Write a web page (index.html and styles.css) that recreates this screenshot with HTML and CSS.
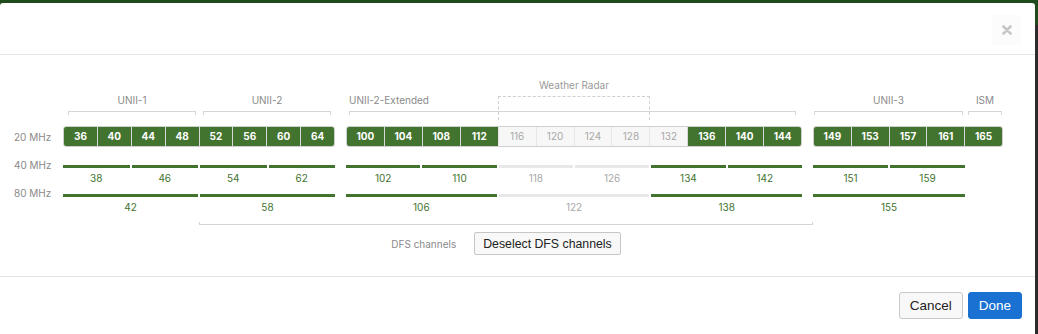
FILE: index.html
```html
<!DOCTYPE html>
<html>
<head>
<meta charset="utf-8">
<link rel="stylesheet" href="styles.css">
</head>
<body>
<div class="modal">
  <div class="modal-header">
    <button class="close" aria-label="Close">
      <svg width="10" height="10" viewBox="0 0 10 10"><path d="M1.5 1.5 L8.5 8.5 M8.5 1.5 L1.5 8.5" stroke="#c6c6c6" stroke-width="2.6" stroke-linecap="round" fill="none"/></svg>
    </button>
  </div>
  <div class="modal-body">
    <div class="chart">
      <div class="widths">
        <div class="w w20">20 MHz</div>
        <div class="w w40">40 MHz</div>
        <div class="w w80">80 MHz</div>
      </div>
      <div class="plan">
        <div class="groups">
          <div class="group g1">
            <div class="band b-unii1"><div class="band-label">UNII-1</div><div class="bracket"></div></div>
            <div class="band b-unii2"><div class="band-label">UNII-2</div><div class="bracket"></div></div>
            <div class="chan-row">
              <div class="ch">36</div><div class="ch">40</div><div class="ch">44</div><div class="ch">48</div>
              <div class="ch">52</div><div class="ch">56</div><div class="ch">60</div><div class="ch">64</div>
            </div>
            <div class="bars bars40">
              <div class="bar">38</div><div class="bar">46</div><div class="bar">54</div><div class="bar">62</div>
            </div>
            <div class="bars bars80">
              <div class="bar">42</div><div class="bar">58</div>
            </div>
          </div>
          <div class="group g2">
            <div class="band b-ext"><div class="band-label left">UNII-2-Extended</div><div class="bracket"></div></div>
            <div class="radar"><div class="radar-label">Weather Radar</div><div class="radar-box"></div></div>
            <div class="chan-row">
              <div class="ch">100</div><div class="ch">104</div><div class="ch">108</div><div class="ch">112</div>
              <div class="ch off">116</div><div class="ch off">120</div><div class="ch off">124</div><div class="ch off">128</div>
              <div class="ch off">132</div><div class="ch">136</div><div class="ch">140</div><div class="ch">144</div>
            </div>
            <div class="bars bars40">
              <div class="bar">102</div><div class="bar">110</div><div class="bar off">118</div>
              <div class="bar off">126</div><div class="bar">134</div><div class="bar">142</div>
            </div>
            <div class="bars bars80">
              <div class="bar">106</div><div class="bar off">122</div><div class="bar">138</div>
            </div>
          </div>
          <div class="group g3">
            <div class="band b-unii3"><div class="band-label">UNII-3</div><div class="bracket"></div></div>
            <div class="band b-ism"><div class="band-label">ISM</div><div class="bracket"></div></div>
            <div class="chan-row">
              <div class="ch">149</div><div class="ch">153</div><div class="ch">157</div><div class="ch">161</div><div class="ch">165</div>
            </div>
            <div class="bars bars40 part">
              <div class="bar">151</div><div class="bar">159</div>
            </div>
            <div class="bars bars80 part">
              <div class="bar">155</div>
            </div>
          </div>
        </div>
        <div class="dfs-bracket"></div>
        <div class="dfs-row">
          <span class="dfs-label">DFS channels</span>
          <button class="btn btn-dfs">Deselect DFS channels</button>
        </div>
      </div>
    </div>
  </div>
  <div class="modal-footer">
    <button class="btn btn-cancel">Cancel</button>
    <button class="btn btn-done">Done</button>
  </div>
</div>
</body>
</html>
```

FILE: styles.css
```css
html, body {
  margin: 0;
  padding: 0;
}
body {
  background: linear-gradient(#1f4a1b 0, #1f4a1b 25px, #2c2c2c 25px);
  height: 334px;
  overflow: hidden;
  font-family: "Inter", "Liberation Sans", sans-serif;
}
.modal {
  margin-top: 3px;
  width: 1035px;
  height: 331px;
  background: #fff;
  border-radius: 3px 3px 0 0;
  box-sizing: border-box;
}
.modal-header {
  height: 52px;
  box-sizing: border-box;
  border-bottom: 1px solid #e3e3e3;
  display: flex;
  justify-content: flex-end;
  align-items: center;
  padding-right: 14px;
  padding-top: 2px;
}
.close {
  width: 29px;
  height: 30px;
  border: none;
  background: #fcfcfc;
  padding: 0;
  display: flex;
  align-items: center;
  justify-content: center;
}
.modal-body {
  padding: 24px 0 21px 14px;
}
.chart {
  display: flex;
  align-items: flex-start;
}
.widths {
  width: 49px;
  padding-top: 51px;
  font-size: 10px;
  line-height: 14px;
  color: #8a8a8a;
}
.w40 { margin-top: 14px; }
.w80 { margin-top: 14px; }

.groups {
  display: flex;
  gap: 11px;
  align-items: flex-start;
}
.group {
  display: grid;
  grid-template-rows: 47px auto auto auto;
}
.g1 { grid-template-columns: repeat(8, 34px); }
.g2 { grid-template-columns: repeat(12, 38px); }
.g3 { grid-template-columns: repeat(5, 38px); }

.band {
  grid-row: 1;
  align-self: end;
  display: flex;
  flex-direction: column;
}
.b-unii1 { grid-column: 1 / 5; margin: 0 3px 0 5px; }
.b-unii2 { grid-column: 5 / 9; margin: 0 4px; }
.b-ext { grid-column: 1 / -1; margin: 0 6px 0 3px; }
.b-unii3 { grid-column: 1 / 5; margin: 0 2px 0 1px; }
.b-ism { grid-column: 5 / 6; margin: 0 1px 0 3px; }
.band-label {
  font-size: 10px;
  line-height: 12px;
  color: #8a8a8a;
  text-align: center;
  white-space: nowrap;
}
.band-label.left { text-align: left; }
.bracket {
  margin-top: 5px;
  margin-bottom: 11px;
  height: 4px;
  box-sizing: border-box;
  border: 1px solid #d6d6d6;
  border-bottom: none;
}
.radar {
  grid-row: 1;
  grid-column: 5 / 9;
  align-self: end;
  display: flex;
  flex-direction: column;
}
.radar-label {
  font-size: 10px;
  line-height: 12px;
  color: #999;
  text-align: center;
  white-space: nowrap;
}
.radar-box {
  margin-top: 5px;
  margin-bottom: 6px;
  height: 24px;
  box-sizing: border-box;
  border: 1px dashed #cfcfcf;
  border-bottom: none;
}
.chan-row {
  grid-row: 2;
  grid-column: 1 / -1;
  display: flex;
  height: 21px;
  box-sizing: border-box;
  border: 1px solid #cfcfcf;
  border-radius: 3px;
  overflow: hidden;
}
.ch {
  flex: 1 1 0;
  background: #42732f;
  color: #fff;
  font-size: 10px;
  font-weight: 700;
  line-height: 19px;
  text-align: center;
}
.ch + .ch { border-left: 1px solid #d9d9d9; }
.ch.off {
  background: #f7f7f7;
  color: #a8a8a8;
  font-weight: 400;
  border-left-color: #e6e6e6;
}
.bars {
  grid-column: 1 / -1;
  display: flex;
  gap: 2px;
}
.bars.part { grid-column: 1 / 5; }
.bars40 { grid-row: 3; margin-top: 18px; }
.bars80 { grid-row: 4; margin-top: 9px; }
.bar {
  flex: 1 1 0;
  border-top: 3px solid #42732f;
  padding-top: 3px;
  font-size: 10px;
  line-height: 14px;
  color: #42732f;
  text-align: center;
}
.bar.off {
  border-top-color: #e8e8e8;
  color: #a8a8a8;
}
.dfs-bracket {
  margin-top: 8px;
  margin-left: 136px;
  width: 614px;
  height: 3px;
  box-sizing: border-box;
  border: 1px solid #d4d4d4;
  border-top: none;
}
.dfs-row {
  margin-top: 7px;
  margin-left: 136px;
  width: 614px;
  display: flex;
  justify-content: center;
  align-items: center;
  gap: 18px;
}
.dfs-label {
  font-size: 10px;
  color: #8a8a8a;
}
.btn {
  font-family: "Liberation Sans", Arial, sans-serif;
  border-radius: 3px;
  box-sizing: border-box;
  cursor: pointer;
}
.btn-dfs {
  height: 23px;
  padding: 0 8px;
  font-size: 12.3px;
  color: #222;
  background: #f8f8f8;
  border: 1px solid #c6c6c6;
  border-radius: 2px;
}
.modal-footer {
  border-top: 1px solid #e3e3e3;
  padding: 15px 13px 15px 0;
  display: flex;
  justify-content: flex-end;
  gap: 5px;
}
.btn-cancel, .btn-done {
  height: 27px;
  padding: 0 10px;
  font-size: 13.5px;
}
.btn-cancel {
  background: #f8f8f8;
  border: 1px solid #c8c8c8;
  color: #222;
}
.btn-done {
  background: #1a71d1;
  border: 1px solid #1a71d1;
  color: #fff;
}
```
